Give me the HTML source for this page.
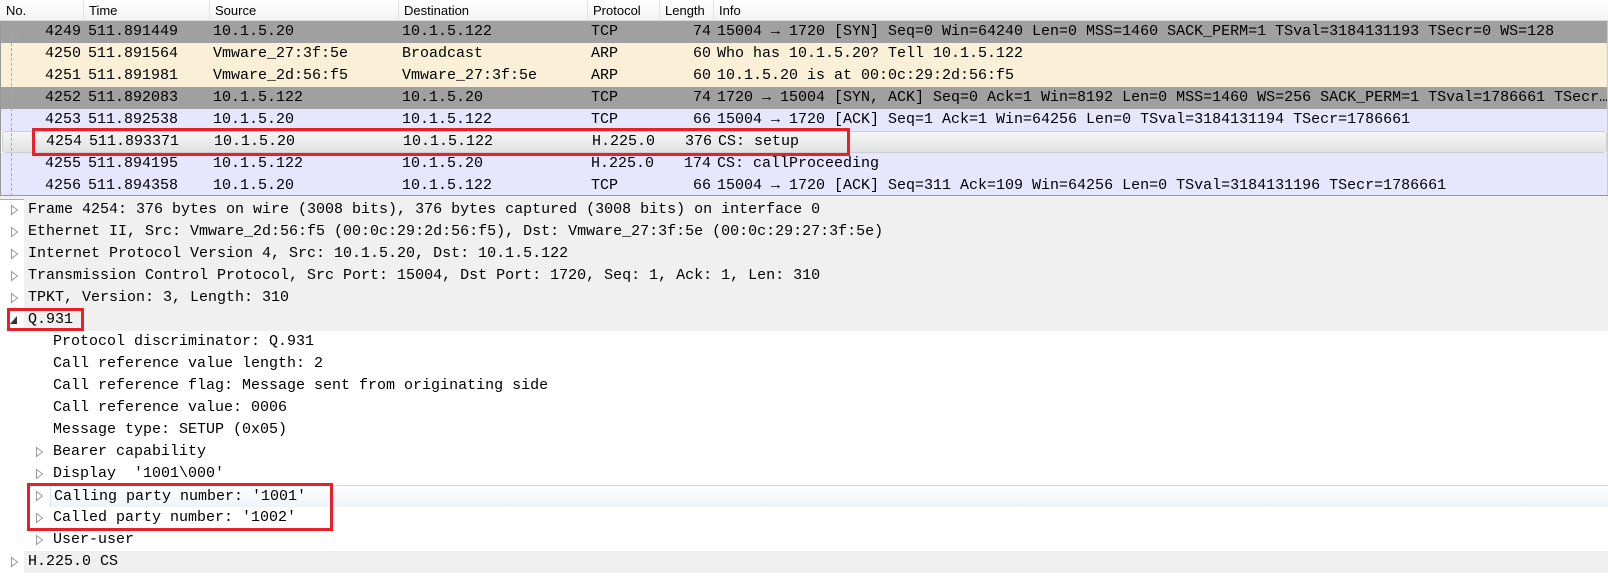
<!DOCTYPE html>
<html><head><style>
*{margin:0;padding:0;box-sizing:border-box}
body{width:1608px;height:578px;overflow:hidden;background:#fff;font-family:"Liberation Mono",monospace;font-size:15px;color:#000;position:relative}
.hdr{position:absolute;left:0;top:0;width:1608px;height:21px;background:linear-gradient(#fff,#f3f3f5);border-bottom:1px solid #d8d8d8;font-family:"Liberation Sans",sans-serif;font-size:13px}
.hdr span{position:absolute;top:3px}
.hdr i{position:absolute;top:0;height:21px;border-left:1px solid #e2e2e2}
.row{position:absolute;left:1px;width:1606px;height:22px;white-space:pre;line-height:22px;overflow:hidden}
.row span{position:absolute;top:0}
.row .n{width:36px;text-align:right}
.row .ln{width:40px;text-align:right}
.g{background:#a0a0a0}.b{background:#faf0d7}.l{background:#e7e6ff}
.s{background:linear-gradient(#f6f6f6,#e2e2e2);border:1px solid #cfcfcf;border-radius:3px}
.d{position:absolute;height:22px;line-height:22px;white-space:pre;right:0}
.box{position:absolute;border:3px solid #e8202a}
</style></head><body>
<div class="hdr">
<span style="left:6px">No.</span><i style="left:83px"></i>
<span style="left:89px">Time</span><i style="left:209px"></i>
<span style="left:215px">Source</span><i style="left:398px"></i>
<span style="left:404px">Destination</span><i style="left:587px"></i>
<span style="left:593px">Protocol</span><i style="left:659px"></i>
<span style="left:665px">Length</span><i style="left:713px"></i>
<span style="left:719px">Info</span>
</div>
<div style="position:absolute;left:0;top:21px;width:1px;height:175px;background:#999"></div>
<div style="position:absolute;left:1607px;top:21px;width:1px;height:175px;background:#ccc"></div>

<div class="row g" style="top:21px"><span class="n" style="left:44px">4249</span><span style="left:87px">511.891449</span><span style="left:212px">10.1.5.20</span><span style="left:401px">10.1.5.122</span><span style="left:590px">TCP</span><span class="ln" style="left:670px">74</span><span style="left:716px">15004 → 1720 [SYN] Seq=0 Win=64240 Len=0 MSS=1460 SACK_PERM=1 TSval=3184131193 TSecr=0 WS=128</span></div>
<div class="row b" style="top:43px"><span class="n" style="left:44px">4250</span><span style="left:87px">511.891564</span><span style="left:212px">Vmware_27:3f:5e</span><span style="left:401px">Broadcast</span><span style="left:590px">ARP</span><span class="ln" style="left:670px">60</span><span style="left:716px">Who has 10.1.5.20? Tell 10.1.5.122</span></div>
<div class="row b" style="top:65px"><span class="n" style="left:44px">4251</span><span style="left:87px">511.891981</span><span style="left:212px">Vmware_2d:56:f5</span><span style="left:401px">Vmware_27:3f:5e</span><span style="left:590px">ARP</span><span class="ln" style="left:670px">60</span><span style="left:716px">10.1.5.20 is at 00:0c:29:2d:56:f5</span></div>
<div class="row g" style="top:87px"><span class="n" style="left:44px">4252</span><span style="left:87px">511.892083</span><span style="left:212px">10.1.5.122</span><span style="left:401px">10.1.5.20</span><span style="left:590px">TCP</span><span class="ln" style="left:670px">74</span><span style="left:716px">1720 → 15004 [SYN, ACK] Seq=0 Ack=1 Win=8192 Len=0 MSS=1460 WS=256 SACK_PERM=1 TSval=1786661 TSecr…</span></div>
<div class="row l" style="top:109px"><span class="n" style="left:44px">4253</span><span style="left:87px">511.892538</span><span style="left:212px">10.1.5.20</span><span style="left:401px">10.1.5.122</span><span style="left:590px">TCP</span><span class="ln" style="left:670px">66</span><span style="left:716px">15004 → 1720 [ACK] Seq=1 Ack=1 Win=64256 Len=0 TSval=3184131194 TSecr=1786661</span></div>
<div class="row s" style="top:131px;left:2px;width:1605px;line-height:20px"><span class="n" style="left:43px">4254</span><span style="left:86px">511.893371</span><span style="left:211px">10.1.5.20</span><span style="left:400px">10.1.5.122</span><span style="left:589px">H.225.0</span><span class="ln" style="left:669px">376</span><span style="left:715px">CS: setup</span></div>
<div class="row l" style="top:153px"><span class="n" style="left:44px">4255</span><span style="left:87px">511.894195</span><span style="left:212px">10.1.5.122</span><span style="left:401px">10.1.5.20</span><span style="left:590px">H.225.0</span><span class="ln" style="left:670px">174</span><span style="left:716px">CS: callProceeding</span></div>
<div class="row l" style="top:175px;height:21px"><span class="n" style="left:44px">4256</span><span style="left:87px">511.894358</span><span style="left:212px">10.1.5.20</span><span style="left:401px">10.1.5.122</span><span style="left:590px">TCP</span><span class="ln" style="left:670px">66</span><span style="left:716px">15004 → 1720 [ACK] Seq=311 Ack=109 Win=64256 Len=0 TSval=3184131196 TSecr=1786661</span></div>
<div style="position:absolute;left:11px;top:33px;height:163px;border-left:1px dashed #aaa"></div>
<div style="position:absolute;left:11px;top:33px;width:9px;border-top:1px solid #aaa"></div>
<div style="position:absolute;left:0;top:195px;width:1608px;height:5px;background:#f0f0f0;border-top:1px solid #999;border-bottom:1px solid #aaa"></div>

<div class="d" style="top:199px;left:24px;background:#f0f0f0;padding-left:4px">Frame 4254: 376 bytes on wire (3008 bits), 376 bytes captured (3008 bits) on interface 0</div>
<div class="d" style="top:221px;left:24px;background:#f0f0f0;padding-left:4px">Ethernet II, Src: Vmware_2d:56:f5 (00:0c:29:2d:56:f5), Dst: Vmware_27:3f:5e (00:0c:29:27:3f:5e)</div>
<div class="d" style="top:243px;left:24px;background:#f0f0f0;padding-left:4px">Internet Protocol Version 4, Src: 10.1.5.20, Dst: 10.1.5.122</div>
<div class="d" style="top:265px;left:24px;background:#f0f0f0;padding-left:4px">Transmission Control Protocol, Src Port: 15004, Dst Port: 1720, Seq: 1, Ack: 1, Len: 310</div>
<div class="d" style="top:287px;left:24px;background:#f0f0f0;padding-left:4px">TPKT, Version: 3, Length: 310</div>
<div class="d" style="top:309px;left:24px;background:#f0f0f0;padding-left:4px">Q.931</div>
<div class="d" style="top:331px;left:53px">Protocol discriminator: Q.931</div>
<div class="d" style="top:353px;left:53px">Call reference value length: 2</div>
<div class="d" style="top:375px;left:53px">Call reference flag: Message sent from originating side</div>
<div class="d" style="top:397px;left:53px">Call reference value: 0006</div>
<div class="d" style="top:419px;left:53px">Message type: SETUP (0x05)</div>
<div class="d" style="top:441px;left:53px">Bearer capability</div>
<div class="d" style="top:463px;left:53px">Display  '1001\000'</div>
<div class="d" style="top:485px;left:50px;padding-left:3px;background:linear-gradient(#fdfeff,#eef4fb);border-top:1px solid #c8daf0;border-left:1px solid #d8e4f2">Calling party number: '1001'</div>
<div class="d" style="top:507px;left:53px">Called party number: '1002'</div>
<div class="d" style="top:529px;left:53px">User-user</div>
<div class="d" style="top:551px;left:24px;background:#f0f0f0;padding-left:4px">H.225.0 CS</div>

<svg style="position:absolute;left:0;top:0" width="60" height="578">
<g fill="#fff" stroke="#999" stroke-width="1">
<path d="M11.5 205.5 L17.5 210 L11.5 214.5Z"/>
<path d="M11.5 227.5 L17.5 232 L11.5 236.5Z"/>
<path d="M11.5 249.5 L17.5 254 L11.5 258.5Z"/>
<path d="M11.5 271.5 L17.5 276 L11.5 280.5Z"/>
<path d="M11.5 293.5 L17.5 298 L11.5 302.5Z"/>
<path d="M36.5 447.5 L42.5 452 L36.5 456.5Z"/>
<path d="M36.5 469.5 L42.5 474 L36.5 478.5Z"/>
<path d="M36.5 491.5 L42.5 496 L36.5 500.5Z"/>
<path d="M36.5 513.5 L42.5 518 L36.5 522.5Z"/>
<path d="M36.5 535.5 L42.5 540 L36.5 544.5Z"/>
<path d="M11.5 557.5 L17.5 562 L11.5 566.5Z"/>
</g>
<path d="M17 316 L17 324 L10 324Z" fill="#333"/>
</svg>

<div class="box" style="left:32px;top:128px;width:818px;height:28px"></div>
<div class="box" style="left:7px;top:308px;width:77px;height:23px"></div>
<div class="box" style="left:27px;top:483px;width:306px;height:48px"></div>
</body></html>
